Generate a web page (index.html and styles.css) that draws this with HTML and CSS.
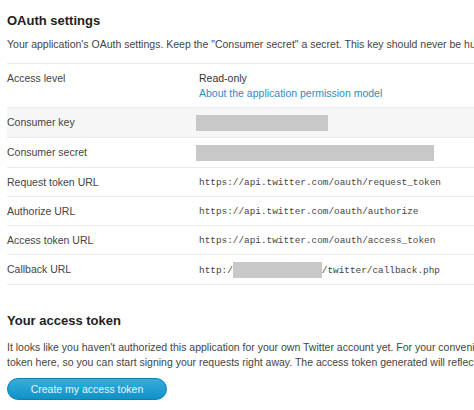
FILE: index.html
```html
<!DOCTYPE html>
<html>
<head>
<meta charset="utf-8">
<link rel="stylesheet" href="styles.css">
</head>
<body>
<div class="page">
  <h2 class="title">OAuth settings</h2>
  <p class="desc">Your application's OAuth settings. Keep the "Consumer secret" a secret. This key should never be human-readable in your application.</p>
  <div class="table">
    <div class="row">
      <div class="label">Access level</div>
      <div class="value">
        <div>Read-only</div>
        <a class="link" href="#">About the application permission model</a>
      </div>
    </div>
    <div class="row shaded">
      <div class="label">Consumer key</div>
      <div class="value"><span class="mask mask-key"></span></div>
    </div>
    <div class="row">
      <div class="label">Consumer secret</div>
      <div class="value"><span class="mask mask-secret"></span></div>
    </div>
    <div class="row">
      <div class="label">Request token URL</div>
      <div class="value mono">https://api.twitter.com/oauth/request_token</div>
    </div>
    <div class="row">
      <div class="label">Authorize URL</div>
      <div class="value mono">https://api.twitter.com/oauth/authorize</div>
    </div>
    <div class="row">
      <div class="label">Access token URL</div>
      <div class="value mono">https://api.twitter.com/oauth/access_token</div>
    </div>
    <div class="row">
      <div class="label">Callback URL</div>
      <div class="value mono">http:/<span class="mask mask-cb"></span>/twitter/callback.php</div>
    </div>
  </div>
  <h2 class="title second">Your access token</h2>
  <p class="text">It looks like you haven't authorized this application for your own Twitter account yet. For your convenience, we give you the opportunity to create your access token here, so you can start signing your requests right away. The access token generated will reflect your application's current permission level.</p>
  <button class="btn">Create my access token</button>
</div>
</body>
</html>
```
FILE: styles.css
```css
html, body {
  margin: 0;
  padding: 0;
  background: #fff;
}
body {
  font-family: "Liberation Sans", Arial, sans-serif;
  color: #333;
  font-size: 10.5px;
  overflow: hidden;
}
.page {
  padding-left: 7px;
  width: 900px;
}
.title {
  font-size: 13px;
  font-weight: bold;
  line-height: 16px;
  margin: 13px 0 0;
  color: #222;
}
.desc {
  margin: 8px 0 0;
  line-height: 15px;
  white-space: nowrap;
  color: #444;
}
.table {
  margin-top: 11px;
  border-top: 1px solid #ececec;
}
.row {
  display: flex;
  border-bottom: 1px solid #ececec;
  padding: 7px 0 6px;
  line-height: 15px;
}
.row.shaded {
  background: #f6f6f6;
}
.label {
  width: 192px;
  flex: none;
  color: #444;
}
.value {
  color: #333;
  display: flex;
  flex-direction: column;
}
.link {
  color: #2b8ec0;
  text-decoration: none;
}
.mono {
  font-family: "Liberation Mono", "DejaVu Sans Mono", monospace;
  font-size: 9.4px;
  flex-direction: row;
  align-items: center;
  color: #444;
}
.mask {
  display: inline-block;
  background: #c8c8c8;
  height: 16px;
  margin-left: -3px;
}
.mask-key { width: 132px; }
.mask-secret { width: 238px; }
.mono .mask {
  margin-left: 0;
  width: 89px;
}
.second {
  margin-top: 28px;
}
.text {
  margin: 11px 0 0;
  line-height: 14.5px;
  width: 750px;
  color: #444;
}
.btn {
  margin-top: 9px;
  width: 160px;
  height: 22px;
  border-radius: 11px;
  border: 1px solid #0d7fb0;
  background: linear-gradient(#34aede, #1091c6);
  color: #e6f6fc;
  font-family: "Liberation Sans", Arial, sans-serif;
  font-size: 10.5px;
  padding: 0;
  display: block;
}
```
